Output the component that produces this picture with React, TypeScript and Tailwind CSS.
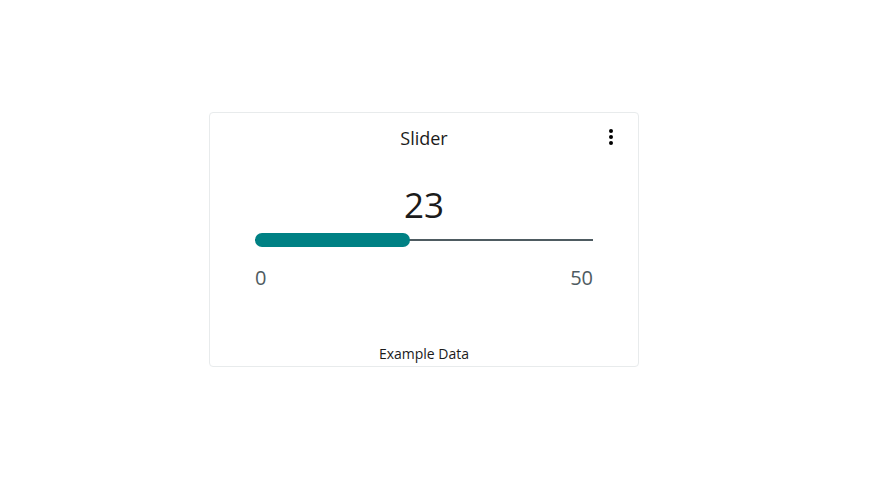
export default function App() {
  const value = 23;
  const min = 0;
  const max = 50;
  const pct = ((value - min) / (max - min)) * 100;

  return (
    <div className="w-[890px] h-[501px] bg-white pl-[209px] pt-[112px] font-['Open_Sans',sans-serif]">
      <div className="w-[430px] h-[255px] rounded border border-[#e8ebec] bg-white flex flex-col">
        <div className="relative h-[50px] flex items-center justify-center">
          <span className="text-[18px] text-[#1b1b1b]">Slider</span>
          <button className="absolute right-[25px] top-[16px] flex flex-col items-center gap-[2px]">
            <span className="w-[4px] h-[4px] rounded-full bg-black" />
            <span className="w-[4px] h-[4px] rounded-full bg-black" />
            <span className="w-[4px] h-[4px] rounded-full bg-black" />
          </button>
        </div>
        <div className="px-[45px] pt-[20px] flex flex-col">
          <div className="text-center text-[35px] leading-[44px] text-[#1b1b1b]">{value}</div>
          <div className="relative h-[14px] mt-[6px]">
            <div className="absolute left-0 right-0 top-[6px] h-[2px] bg-[#4e5b61]" />
            <div
              className="absolute left-0 top-0 h-[14px] rounded-full bg-[#008184]"
              style={{ width: `${pct}%` }}
            />
          </div>
          <div className="flex justify-between mt-[17px] text-[20px] leading-[28px] text-[#4e5b61]">
            <span>{min}</span>
            <span>{max}</span>
          </div>
        </div>
        <div className="mt-auto pb-[2px] text-center text-[14px] text-[#1b1b1b]">Example Data</div>
      </div>
    </div>
  );
}
